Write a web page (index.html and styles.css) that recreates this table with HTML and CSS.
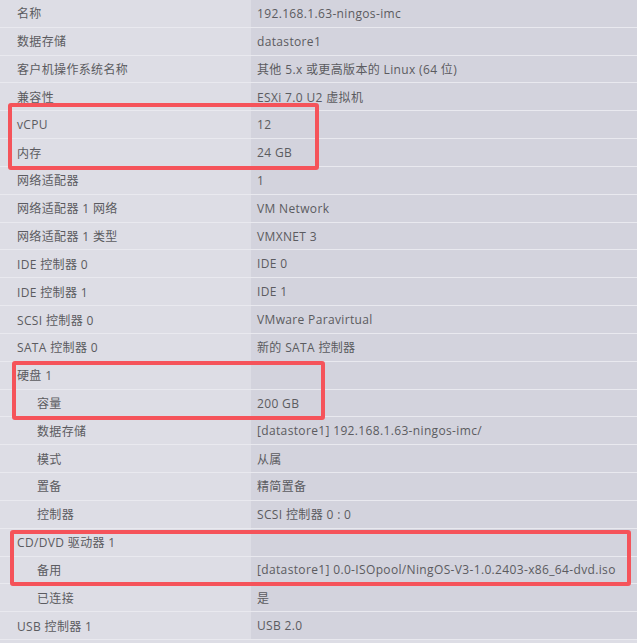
FILE: index.html
```html
<!DOCTYPE html>
<html lang="zh-CN">
<head>
<meta charset="utf-8">
<link rel="stylesheet" href="styles.css">
</head>
<body>
<div class="sheet">
  <div class="row"><div class="k">名称</div><div class="v">192.168.1.63-ningos-imc</div></div>
  <div class="row"><div class="k">数据存储</div><div class="v">datastore1</div></div>
  <div class="row"><div class="k">客户机操作系统名称</div><div class="v">其他 5.x 或更高版本的 Linux (64 位)</div></div>
  <div class="row"><div class="k">兼容性</div><div class="v">ESXi 7.0 U2 虚拟机</div></div>
  <div class="row"><div class="k">vCPU</div><div class="v">12</div></div>
  <div class="row"><div class="k">内存</div><div class="v">24 GB</div></div>
  <div class="row"><div class="k">网络适配器</div><div class="v">1</div></div>
  <div class="row"><div class="k">网络适配器 1 网络</div><div class="v">VM Network</div></div>
  <div class="row"><div class="k">网络适配器 1 类型</div><div class="v">VMXNET 3</div></div>
  <div class="row"><div class="k">IDE 控制器 0</div><div class="v">IDE 0</div></div>
  <div class="row"><div class="k">IDE 控制器 1</div><div class="v">IDE 1</div></div>
  <div class="row"><div class="k">SCSI 控制器 0</div><div class="v">VMware Paravirtual</div></div>
  <div class="row"><div class="k">SATA 控制器 0</div><div class="v">新的 SATA 控制器</div></div>
  <div class="row"><div class="k">硬盘 1</div><div class="v"></div></div>
  <div class="row"><div class="k sub">容量</div><div class="v">200 GB</div></div>
  <div class="row"><div class="k sub">数据存储</div><div class="v">[datastore1] 192.168.1.63-ningos-imc/</div></div>
  <div class="row"><div class="k sub">模式</div><div class="v">从属</div></div>
  <div class="row"><div class="k sub">置备</div><div class="v">精简置备</div></div>
  <div class="row"><div class="k sub">控制器</div><div class="v">SCSI 控制器 0 : 0</div></div>
  <div class="row"><div class="k">CD/DVD 驱动器 1</div><div class="v"></div></div>
  <div class="row"><div class="k sub">备用</div><div class="v">[datastore1] 0.0-ISOpool/NingOS-V3-1.0.2403-x86_64-dvd.iso</div></div>
  <div class="row"><div class="k sub">已连接</div><div class="v">是</div></div>
  <div class="row"><div class="k">USB 控制器 1</div><div class="v">USB 2.0</div></div>

  <div class="mark mark-cpu"></div>
  <div class="mark mark-disk"></div>
  <div class="mark mark-dvd"></div>
</div>
</body>
</html>
```

FILE: styles.css
```css
html, body {
  margin: 0;
  padding: 0;
  background: #dddde5;
}
body {
  width: 637px;
  height: 643px;
  overflow: hidden;
  font-family: "Open Sans", "Noto Sans CJK SC", sans-serif;
  font-size: 12px;
  letter-spacing: 0.35px;
  color: #5b5b60;
}
.sheet {
  position: relative;
  display: flex;
  flex-direction: column;
}
.row {
  display: grid;
  grid-template-columns: 251px 1fr;
  height: 27.83px;
  box-sizing: border-box;
  border-bottom: 1px solid #e9e9ef;
}
.k, .v {
  display: flex;
  align-items: center;
  white-space: nowrap;
}
.k {
  background: #dddde5;
  padding-left: 17px;
}
.k.sub {
  padding-left: 37px;
}
.v {
  background: #d3d3dd;
  padding-left: 6px;
}
.mark {
  position: absolute;
  border: 4px solid #f5535a;
  border-radius: 3px;
  box-sizing: border-box;
}
.mark-cpu {
  left: 8px;
  top: 103px;
  width: 311px;
  height: 67px;
}
.mark-disk {
  left: 12px;
  top: 361px;
  width: 313px;
  height: 59px;
}
.mark-dvd {
  left: 10px;
  top: 530px;
  width: 621px;
  height: 56px;
}
```
